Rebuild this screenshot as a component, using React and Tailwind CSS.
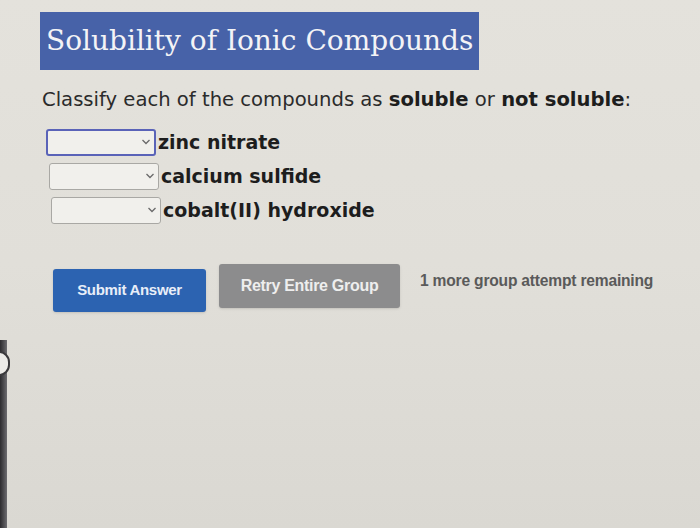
import React from "react";

const Select = ({ focused, className }) => (
  <div
    className={`relative flex h-[27px] w-[110px] items-center justify-end rounded-[3px] bg-[#f1f0ec] pr-[3px] ${
      focused ? "border-2 border-[#5a63b8]" : "border border-[#a9a8a4]"
    } ${className}`}
  >
    <svg width="10" height="8" viewBox="0 0 10 8" className="text-[#6a6a6a]">
      <path d="M1.5 2 L5 5.5 L8.5 2" fill="none" stroke="currentColor" strokeWidth="1.3" />
    </svg>
  </div>
);

const Row = ({ label, focused, offset }) => (
  <div className={`flex items-center ${offset}`}>
    <Select focused={focused} />
    <p className="pl-[2px] text-[19px] font-bold leading-none text-[#1d1d1d]">{label}</p>
  </div>
);

export default function App() {
  return (
    <div
      className="relative h-[528px] w-[700px] overflow-hidden bg-gradient-to-b from-[#e4e2dc] via-[#e1dfd9] to-[#dad8d2] font-['DejaVu_Sans',sans-serif]"
    >
      {/* screen edge */}
      <div className="absolute left-0 top-[340px] h-[188px] w-[7px] bg-gradient-to-r from-[#2c2b2e] to-[#6d6c70]" />
      <div className="absolute left-[-12px] top-[351px] h-[25px] w-[22px] rounded-full border-2 border-[#3a393c] bg-[#ecebe8]" />

      <div className="pl-[40px] pt-[12px]">
        {/* title */}
        <div className="inline-block bg-[#4762a8] px-[6px] pb-[5px] pt-[5px]">
          <h1 className="font-['DejaVu_Serif',serif] text-[28px] leading-[48px] text-[#f3f3f6]">
            Solubility of Ionic Compounds
          </h1>
        </div>

        {/* question */}
        <p className="mt-[20px] pl-[2px] text-[19.6px] leading-none text-[#2b2b2b]">
          Classify each of the compounds as <b className="text-[#1d1d1d]">soluble</b> or{" "}
          <b className="text-[#1d1d1d]">not soluble</b>:
        </p>

        <div className="mt-[19px] flex flex-col gap-[7px]">
          <Row label="zinc nitrate" focused offset="ml-[6px]" />
          <Row label="calcium sulfide" offset="ml-[9px]" />
          <Row label="cobalt(II) hydroxide" offset="ml-[11px]" />
        </div>

        {/* actions */}
        <div className="mt-[40px] flex items-start pl-[13px]">
          <button className="mt-[5px] h-[43px] w-[153px] rounded-[3px] bg-[#2c63b1] font-['Liberation_Sans',sans-serif] text-[15px] font-bold tracking-[-0.3px] text-[#e8eef8] shadow-sm">
            Submit Answer
          </button>
          <button className="ml-[13px] h-[44px] w-[181px] rounded-[3px] bg-[#8c8c8d] font-['Liberation_Sans',sans-serif] text-[16px] font-bold tracking-[-0.3px] text-[#eeeeee] shadow-sm">
            Retry Entire Group
          </button>
          <p className="ml-[20px] mt-[5px] font-['Liberation_Sans',sans-serif] text-[15.6px] font-bold tracking-[-0.2px] text-[#5a5a5a]">
            1 more group attempt remaining
          </p>
        </div>
      </div>
    </div>
  );
}
